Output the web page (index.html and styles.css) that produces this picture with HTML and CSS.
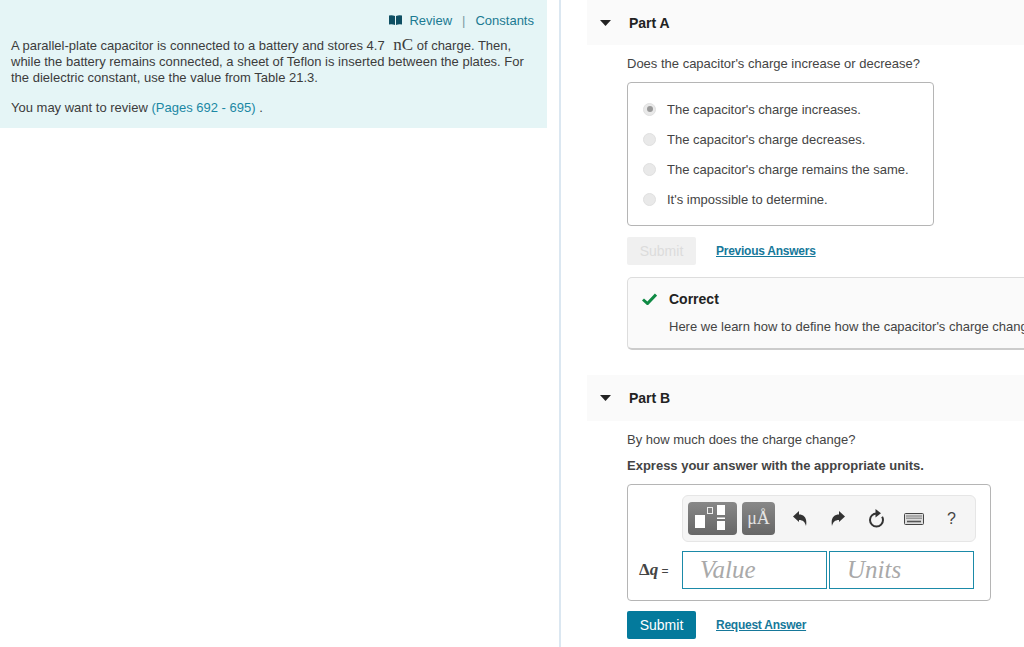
FILE: index.html
```html
<!DOCTYPE html>
<html lang="en">
<head>
<meta charset="utf-8">
<title>Parallel-plate capacitor</title>
<link rel="stylesheet" href="styles.css">
</head>
<body>
<div class="page">
  <aside class="left">
    <div class="intro">
      <div class="intro-top">
        <svg class="book" width="13" height="10" viewBox="0 0 13 10"><path d="M0 .5q3-.8 6 .5v9Q3 8.800 0 9.500zM13 .5q-3-.8-6 .5v9q3-1.200 6-.5z" fill="#0f4f63"/></svg>
        <a class="tlink">Review</a><span class="sep">|</span><a class="tlink">Constants</a>
      </div>
      <p class="para">A parallel-plate capacitor is connected to a battery and stores 4.7 <span class="math">nC</span> of charge. Then, while the battery remains connected, a sheet of Teflon is inserted between the plates. For the dielectric constant, use the value from Table 21.3.</p>
      <p class="para review">You may want to review <a class="plink">(Pages 692 - 695)</a> .</p>
    </div>
  </aside>
  <main class="right">
    <header class="part-head">
      <svg class="caret" width="11" height="6" viewBox="0 0 11 6"><path d="M0 0h11L5.500 6z" fill="#222"/></svg>
      <span class="part-title">Part A</span>
    </header>
    <section class="part-body">
      <p class="q q-a">Does the capacitor's charge increase or decrease?</p>
      <div class="choices">
        <div class="choice"><span class="radio on"></span>The capacitor's charge increases.</div>
        <div class="choice"><span class="radio"></span>The capacitor's charge decreases.</div>
        <div class="choice"><span class="radio"></span>The capacitor's charge remains the same.</div>
        <div class="choice"><span class="radio"></span>It's impossible to determine.</div>
      </div>
      <div class="actions act-a">
        <span class="btn disabled">Submit</span><a class="alink">Previous Answers</a>
      </div>
      <div class="feedback">
        <svg class="check" width="15" height="12" viewBox="0 0 15 12"><path d="M1 6.500l4.500 4L14 1.500" fill="none" stroke="#0f8a44" stroke-width="3"/></svg>
        <div class="fb-text">
          <div class="fb-title">Correct</div>
          <div class="fb-line">Here we learn how to define how the capacitor's charge changes</div>
        </div>
      </div>
    </section>
    <header class="part-head part-b">
      <svg class="caret" width="11" height="6" viewBox="0 0 11 6"><path d="M0 0h11L5.500 6z" fill="#222"/></svg>
      <span class="part-title">Part B</span>
    </header>
    <section class="part-body">
      <p class="q q-b">By how much does the charge change?</p>
      <p class="q strong">Express your answer with the appropriate units.</p>
      <div class="answer">
        <div class="toolbar">
          <span class="tool tool-wide">
            <svg width="30" height="25" viewBox="0 0 30 25"><rect x="0" y="10" width="10" height="13" fill="#fff"/><rect x="12.500" y="2.500" width="5" height="6" fill="none" stroke="#eee"/><rect x="22" y="0" width="8" height="10" fill="#fff"/><rect x="22" y="12.500" width="8" height="1.500" fill="#fff"/><rect x="22" y="16" width="8" height="9" fill="#fff"/></svg>
          </span>
          <span class="tool tool-unit">μÅ</span>
          <svg class="ic ic-undo" width="14" height="15" viewBox="0 0 14 15"><path d="M0 5.500L6 0v3.500c5 0 8.500 3.500 7 11.500-1-4-3-6-7-6V11z" fill="#333"/></svg>
          <svg class="ic ic-redo" width="14" height="15" viewBox="0 0 14 15"><path d="M14 5.500L8 0v3.500C3 3.500-.5 7 1 15c1-4 3-6 7-6V11z" fill="#333"/></svg>
          <svg class="ic ic-reset" width="17" height="19" viewBox="0 0 17 19"><path d="M8.500 4.500A6.500 6.500 0 1 0 15 11c0-1.200-.3-2.300-.9-3.300" fill="none" stroke="#333" stroke-width="2"/><path d="M7.500 0l5.500 4.300-5.500 4.200z" fill="#333"/></svg>
          <svg class="ic ic-keys" width="20" height="12" viewBox="0 0 20 12"><rect x=".5" y=".5" width="19" height="11" rx="1" fill="#ddd" stroke="#444"/><path d="M2.500 3h15M2.500 5.300h15" stroke="#555" stroke-dasharray="1 1" stroke-width="1.400"/><path d="M3 8.500h14" stroke="#555" stroke-width="1.600"/></svg>
          <span class="help">?</span>
        </div>
        <div class="answer-row">
          <span class="dq"><span class="delta">Δ</span><i>q</i><span class="eq"> =</span></span>
          <span class="field">Value</span>
          <span class="field second">Units</span>
        </div>
      </div>
      <div class="actions act-b">
        <span class="btn primary">Submit</span><a class="alink">Request Answer</a>
      </div>
    </section>
  </main>
</div>
</body>
</html>
```
FILE: styles.css
```css
* { box-sizing: border-box; }
html, body { margin: 0; height: 100%; }
body { overflow: hidden; background: #fff; color: #444; font-family: "Liberation Sans", Arial, sans-serif; font-size: 13px; }
p { margin: 0; }
.page { display: flex; width: 1024px; height: 647px; overflow: hidden; }
.left { flex: 0 0 561px; border-right: 2px solid #dbe7f1; padding-right: 12px; }
.intro { height: 128px; background: #e5f5f6; padding: 13px 13px 0 11px; }
.intro-top { display: flex; justify-content: flex-end; align-items: center; height: 14px; }
.book { margin-right: 7px; }
.tlink { color: #1b7a92; }
.sep { margin: 0 10px; color: #7a9aa3; }
.para { line-height: 16px; margin-top: 11px; padding-right: 7px; color: #3c3c3c; }
.para.review { margin-top: 14px; }
.math { font-family: "Liberation Serif", serif; font-size: 17px; line-height: 14px; margin-left: 5px; }
.plink { color: #1b88a4; }
.right { flex: 0 0 437px; margin-left: 26px; min-width: 0; }
.part-head { display: flex; align-items: center; height: 45px; padding-left: 13px; background: #fafafa; }
.part-b { height: 46px; margin-top: 25px; }
.caret { flex: none; }
.part-title { margin-left: 18px; font-weight: bold; font-size: 14px; color: #222; }
.part-body { padding-left: 40px; }
.q { line-height: 16px; }
.q-a { margin-top: 11px; }
.q-b { margin-top: 11px; }
.strong { margin-top: 10px; font-weight: bold; }
.choices { width: 307px; height: 144px; margin-top: 10px; padding-top: 11px; border: 1px solid #b5b5b5; border-radius: 4px; background: #fff; }
.choice { display: flex; align-items: center; height: 30px; padding-left: 15px; }
.radio { width: 13px; height: 13px; margin-right: 11px; border-radius: 50%; background: #e9e9e9; border: 1px solid #e0e0e0; position: relative; }
.radio.on::after { content: ""; position: absolute; left: 2.500px; top: 2.500px; width: 6px; height: 6px; border-radius: 50%; background: #999; }
.actions { display: flex; align-items: center; }
.act-a { margin-top: 11px; }
.act-b { margin-top: 10px; }
.btn { display: flex; align-items: center; justify-content: center; width: 69px; height: 28px; border-radius: 2px; font-size: 14px; }
.btn.disabled { background: #f0f0f0; color: #dcdcdc; }
.btn.primary { background: #047a9c; color: #fff; }
.alink { margin-left: 20px; font-weight: bold; font-size: 12px; letter-spacing: -.25px; color: #16789a; text-decoration: underline; }
.feedback { display: flex; width: 420px; height: 73px; margin-top: 12px; padding: 14px 0 0 14px; background: #fafafa; border: 1px solid #ddd; border-bottom: 2px solid #ccc; border-radius: 5px; }
.check { flex: none; margin-top: 1px; }
.fb-text { margin-left: 12px; white-space: nowrap; }
.fb-title { font-weight: bold; font-size: 14px; color: #222; line-height: 15px; }
.fb-line { margin-top: 13px; line-height: 14px; }
.answer { width: 364px; height: 117px; margin-top: 10px; padding: 10px 16px 0 54px; border: 1px solid #b5b5b5; border-radius: 4px; }
.toolbar { display: flex; align-items: center; width: 294px; height: 47px; padding-left: 5px; background: #f5f5f5; border: 1px solid #e6e6e6; border-radius: 6px; }
.tool { display: flex; align-items: center; justify-content: center; height: 33px; border-radius: 4px; background: linear-gradient(#888, #666); color: #e4e4e4; }
.tool-wide { width: 49px; justify-content: flex-start; padding: 0 0 2px 7px; }
.tool-unit { width: 33px; margin-left: 5px; font-family: "Liberation Serif", serif; font-size: 18px; }
.ic { flex: none; }
.ic-undo { margin-left: 18px; }
.ic-redo { margin-left: 24px; }
.ic-reset { margin-left: 23px; }
.ic-keys { margin-left: 19px; }
.help { margin-left: 23px; font-size: 16px; }
.answer-row { display: flex; align-items: center; height: 38px; margin-top: 9px; margin-left: -43px; }
.dq { width: 43px; font-family: "Liberation Serif", serif; font-weight: bold; white-space: nowrap; }
.delta { font-size: 17px; }
.dq i { font-size: 17px; }
.eq { font-size: 12px; font-weight: normal; font-family: "Liberation Sans", sans-serif; }
.field { display: flex; align-items: center; width: 145px; height: 38px; padding-left: 17px; border: 1px solid #1b8aa8; font-family: "Liberation Serif", serif; font-style: italic; font-size: 25px; color: #a9a9a9; }
.field.second { margin-left: 2px; }
```
